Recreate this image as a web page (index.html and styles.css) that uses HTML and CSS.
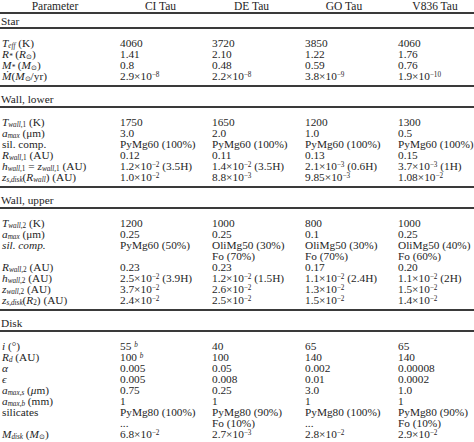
FILE: index.html
```html
<!DOCTYPE html>
<html>
<head>
<meta charset="utf-8">
<link rel="stylesheet" href="styles.css">
</head>
<body>
<table class="tab">
<colgroup><col class="c1"><col class="c2"><col class="c3"><col class="c4"><col class="c5"></colgroup>
<thead>
<tr class="head"><th class="h1">Parameter</th><th class="h2">CI Tau</th><th class="h3">DE Tau</th><th class="h4">GO Tau</th><th class="h5">V836 Tau</th></tr>
</thead>
<tbody>
<tr class="title top"><td colspan="5">Star</td></tr>
<tr class="first"><td><i>T<sub>eff</sub></i> (K)</td><td>4060</td><td>3720</td><td>3850</td><td>4060</td></tr>
<tr><td><i>R<sub>*</sub></i> (<i>R</i><sub>⊙</sub>)</td><td>1.41</td><td>2.10</td><td>1.22</td><td>1.76</td></tr>
<tr><td><i>M<sub>*</sub></i> (<i>M</i><sub>⊙</sub>)</td><td>0.8</td><td>0.48</td><td>0.59</td><td>0.76</td></tr>
<tr class="last"><td><i>M&#775;</i>(<i>M</i><sub>⊙</sub>/yr)</td><td>2.9×10<sup>−8</sup></td><td>2.2×10<sup>−8</sup></td><td>3.8×10<sup>−9</sup></td><td>1.9×10<sup>−10</sup></td></tr>
</tbody>
<tbody>
<tr class="title"><td colspan="5">Wall, lower</td></tr>
<tr class="first"><td><i>T<sub>wall,</sub></i><sub>1</sub> (K)</td><td>1750</td><td>1650</td><td>1200</td><td>1300</td></tr>
<tr><td><i>a<sub>max</sub></i> (μm)</td><td>3.0</td><td>2.0</td><td>1.0</td><td>0.5</td></tr>
<tr><td>sil. comp.</td><td>PyMg60 (100%)</td><td>PyMg60 (100%)</td><td>PyMg60 (100%)</td><td>PyMg60 (100%)</td></tr>
<tr><td><i>R<sub>wall,</sub></i><sub>1</sub> (AU)</td><td>0.12</td><td>0.11</td><td>0.13</td><td>0.15</td></tr>
<tr><td><i>h<sub>wall,</sub></i><sub>1</sub> = <i>z<sub>wall,</sub></i><sub>1</sub> (AU)</td><td>1.2×10<sup>−2</sup> (3.5H)</td><td>1.4×10<sup>−2</sup> (3.5H)</td><td>2.1×10<sup>−3</sup> (0.6H)</td><td>3.7×10<sup>−3</sup> (1H)</td></tr>
<tr class="last"><td><i>z<sub>s,disk</sub></i>(<i>R<sub>wall</sub></i>) (AU)</td><td>1.0×10<sup>−2</sup></td><td>8.8×10<sup>−3</sup></td><td>9.85×10<sup>−3</sup></td><td>1.08×10<sup>−2</sup></td></tr>
</tbody>
<tbody>
<tr class="title"><td colspan="5">Wall, upper</td></tr>
<tr class="first"><td><i>T<sub>wall,</sub></i><sub>2</sub> (K)</td><td>1200</td><td>1000</td><td>800</td><td>1000</td></tr>
<tr><td><i>a<sub>max</sub></i> (μm)</td><td>0.25</td><td>0.25</td><td>0.1</td><td>0.25</td></tr>
<tr><td><i>sil. comp.</i></td><td>PyMg60 (50%)</td><td>OliMg50 (30%)</td><td>OliMg50 (30%)</td><td>OliMg50 (40%)</td></tr>
<tr><td></td><td></td><td>Fo (70%)</td><td>Fo (70%)</td><td>Fo (60%)</td></tr>
<tr><td><i>R<sub>wall,</sub></i><sub>2</sub> (AU)</td><td>0.23</td><td>0.23</td><td>0.17</td><td>0.20</td></tr>
<tr><td><i>h<sub>wall,</sub></i><sub>2</sub> (AU)</td><td>2.5×10<sup>−2</sup> (3.9H)</td><td>1.2×10<sup>−2</sup> (1.5H)</td><td>1.1×10<sup>−2</sup> (2.4H)</td><td>1.1×10<sup>−2</sup> (2H)</td></tr>
<tr><td><i>z<sub>wall,</sub></i><sub>2</sub> (AU)</td><td>3.7×10<sup>−2</sup></td><td>2.6×10<sup>−2</sup></td><td>1.3×10<sup>−2</sup></td><td>1.5×10<sup>−2</sup></td></tr>
<tr class="last"><td><i>z<sub>s,disk</sub></i>(<i>R</i><sub>2</sub>) (AU)</td><td>2.4×10<sup>−2</sup></td><td>2.5×10<sup>−2</sup></td><td>1.5×10<sup>−2</sup></td><td>1.4×10<sup>−2</sup></td></tr>
</tbody>
<tbody>
<tr class="title"><td colspan="5">Disk</td></tr>
<tr class="first"><td><i>i</i> (°)</td><td>55 <sup><i>b</i></sup></td><td>40</td><td>65</td><td>65</td></tr>
<tr><td><i>R<sub>d</sub></i> (AU)</td><td>100 <sup><i>b</i></sup></td><td>100</td><td>140</td><td>140</td></tr>
<tr><td><i>α</i></td><td>0.005</td><td>0.05</td><td>0.002</td><td>0.00008</td></tr>
<tr><td><i>ϵ</i></td><td>0.005</td><td>0.008</td><td>0.01</td><td>0.0002</td></tr>
<tr><td><i>a<sub>max,s</sub></i> (<i>μ</i>m)</td><td>0.75</td><td>0.25</td><td>3.0</td><td>1.0</td></tr>
<tr><td><i>a<sub>max,b</sub></i> (mm)</td><td>1</td><td>1</td><td>1</td><td>1</td></tr>
<tr><td>silicates</td><td>PyMg80 (100%)</td><td>PyMg80 (90%)</td><td>PyMg80 (100%)</td><td>PyMg80 (90%)</td></tr>
<tr><td></td><td>...</td><td>Fo (10%)</td><td>...</td><td>Fo (10%)</td></tr>
<tr><td><i>M<sub>disk</sub></i> (<i>M</i><sub>⊙</sub>)</td><td>6.8×10<sup>−2</sup></td><td>2.7×10<sup>−3</sup></td><td>2.8×10<sup>−2</sup></td><td>2.9×10<sup>−2</sup></td></tr>
</tbody>
</table>
</body>
</html>
```
FILE: styles.css
```css
html, body {
  margin: 0;
  padding: 0;
  background: #ffffff;
}
body {
  width: 474px;
  height: 442px;
  overflow: hidden;
  font-family: "Liberation Serif", "Times New Roman", serif;
  font-size: 11.3px;
  color: #1e1e1e;
}
.tab {
  width: 474px;
  table-layout: fixed;
  border-collapse: separate;
  border-spacing: 0;
}
.c1 { width: 118px; }
.c2 { width: 92px; }
.c3 { width: 93px; }
.c4 { width: 93px; }
.c5 { width: 78px; }

.tab th, .tab td {
  padding: 0 0 0 2px;
  line-height: 11px;
  height: 11px;
  white-space: nowrap;
  overflow: visible;
  text-align: left;
  vertical-align: top;
  font-weight: normal;
}
.head th {
  height: 12px;
  line-height: 12px;
  font-size: 11.5px;
  text-align: center;
}
.head .h1 { padding-right: 10px; }
.head .h2 { padding-right: 9px; }
.head .h3 { padding-right: 12px; }
.head .h4 { padding-right: 13px; }
.head .h5 { padding-right: 2px; }

.title td {
  border-top: 2px solid #3a3a3a;
  border-bottom: 2px solid #3a3a3a;
  padding-top: 7px;
  padding-bottom: 1px;
  padding-left: 1px;
  height: 11px;
  line-height: 11px;
}
.title.top td {
  padding-top: 2px;
  padding-bottom: 0;
  height: 10.5px;
  line-height: 10.5px;
}
.first td { padding-top: 9.5px; }
.last td { padding-bottom: 2.5px; }

sup, sub {
  font-size: 7.2px;
  line-height: 0;
}
sup { vertical-align: 3.5px; }
sub { vertical-align: -1px; }
```
